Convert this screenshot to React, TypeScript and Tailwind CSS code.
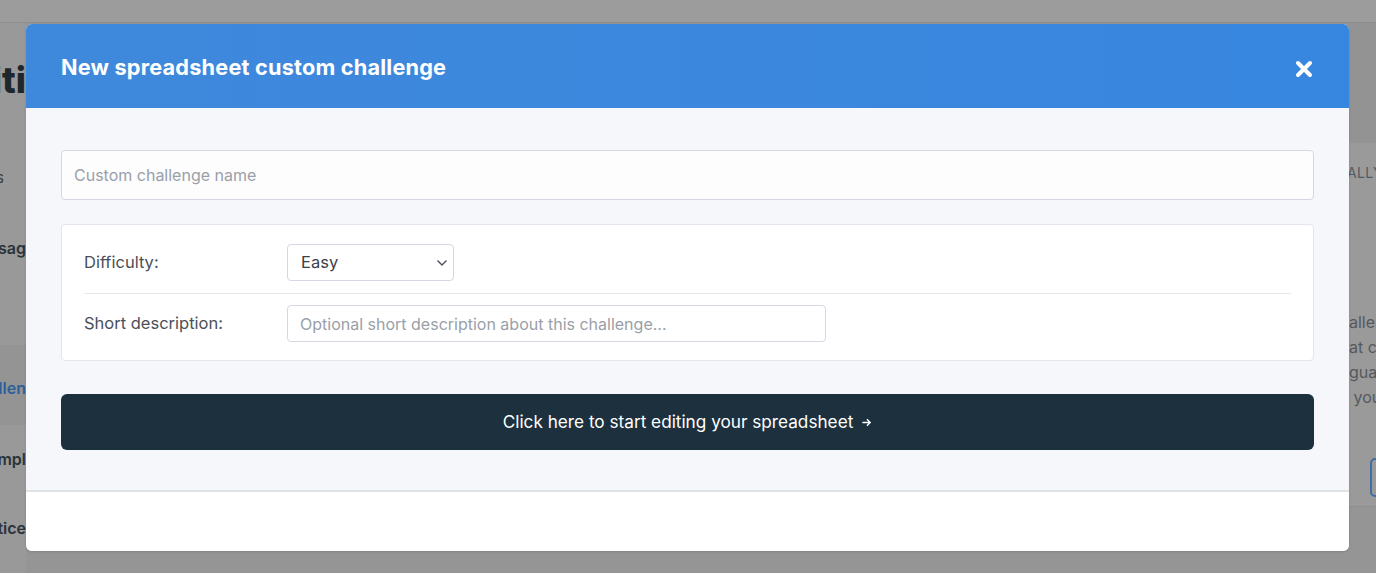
import React from "react";

export default function App() {
  const font = { fontFamily: "Inter, 'Noto Sans', sans-serif" };
  return (
    <div className="relative w-[1376px] h-[573px] overflow-hidden bg-[#959595]" style={font}>
      {/* background page (dimmed) */}
      <div className="flex flex-col h-full">
        <div className="h-[23px] bg-[#9c9c9c] border-b border-[#8e8e8e]" />
        <div className="flex flex-1">
          <div className="w-[26px] bg-[#999999] flex flex-col overflow-hidden">
            <div className="h-[114px] flex items-center justify-end whitespace-nowrap text-[36px] font-extrabold text-[#1e272d]">Competiti</div>
            <div className="h-[64px] flex items-end justify-end whitespace-nowrap text-[15px] text-[#3a3f44] pb-[12px]">
              <span className="mr-[22px]">Tools</span>
            </div>
            <div className="h-[94px] flex items-center justify-end whitespace-nowrap text-[16px] font-semibold text-[#2b3339]">Messag</div>
            <div className="h-[50px]" />
            <div className="h-[80px] bg-[#949494] flex items-center justify-end whitespace-nowrap text-[16px] font-semibold text-[#2d5f9a] pt-[6px]">Challen</div>
            <div className="h-[68px] flex items-center justify-end whitespace-nowrap text-[16px] font-semibold text-[#2b3339]">Exampl</div>
            <div className="h-[70px] flex items-center justify-end whitespace-nowrap text-[16px] font-semibold text-[#2b3339]">Practice</div>
          </div>
          <div className="flex-1" />
          <div className="w-[27px] flex flex-col overflow-hidden">
            <div className="h-[120px] bg-[#939393]" />
            <div className="flex-1 bg-[#9a9a9a] flex flex-col border-b border-[#8f8f8f] mb-[66px]">
              <div className="h-[58px] flex items-center whitespace-nowrap text-[14px] text-[#555a5f] tracking-wide -ml-[2px]">ALLY</div>
              <div className="h-[109px]" />
              <div className="flex flex-col text-[16px] text-[#55595d] leading-[25px] whitespace-nowrap">
                <span>allenges</span>
                <span>at can</span>
                <span>guage</span>
                <span>&nbsp;your</span>
              </div>
              <div className="mt-[48px] ml-[21px] w-[40px] h-[39px] rounded-[5px] border-2 border-[#3f6ea6]" />
            </div>
          </div>
        </div>
      </div>

      {/* modal */}
      <div className="absolute left-[26px] top-[24px] w-[1323px] h-[527px] rounded-[6px] overflow-hidden bg-white flex flex-col shadow-sm">
        <div className="h-[84px] shrink-0 bg-gradient-to-r from-[#3f89dc] to-[#3786df] flex items-center justify-between pl-[35px] pr-[36px]">
          <h2 className="text-white text-[21.7px] font-bold tracking-[0.2px] mt-[3px]">New spreadsheet custom challenge</h2>
          <svg width="18" height="18" viewBox="0 0 18 18" className="mt-[5px]">
            <path d="M3 3 L15 15 M15 3 L3 15" stroke="white" strokeWidth="4" strokeLinecap="round" />
          </svg>
        </div>
        <div className="bg-[#f5f7fb] border-b-2 border-[#dfe2e7] px-[35px] pt-[42px] pb-[40px] flex flex-col">
          <input
            className="h-[50px] w-full rounded-[4px] border border-[#d4d8e2] bg-[#fdfdfe] px-[12px] text-[16px] text-[#333] placeholder:text-[#9aa0a8] outline-none"
            placeholder="Custom challenge name"
            style={font}
          />
          <div className="mt-[24px] bg-white border border-[#e2e5eb] rounded-[4px] px-[22px]">
            <div className="pt-[19px] pb-[12px] flex items-center border-b border-[#e6e8ec]">
              <span className="w-[203px] text-[16.5px] text-[#4a5058]">Difficulty:</span>
              <div className="relative w-[167px] h-[37px]">
                <select
                  className="appearance-none w-full h-full rounded-[4px] border border-[#d4d8e2] bg-white pl-[13px] text-[16.5px] text-[#3b4148] outline-none"
                  style={font}
                  defaultValue="Easy"
                >
                  <option>Easy</option>
                  <option>Medium</option>
                  <option>Hard</option>
                </select>
                <svg className="absolute right-[6px] top-[15px] pointer-events-none" width="12" height="8" viewBox="0 0 12 8">
                  <path d="M1.5 1.5 L6 6 L10.5 1.5" fill="none" stroke="#4a5058" strokeWidth="1.4" />
                </svg>
              </div>
            </div>
            <div className="pt-[11px] pb-[18px] flex items-center">
              <span className="w-[203px] text-[16.5px] text-[#4a5058]">Short description:</span>
              <input
                className="w-[539px] h-[37px] rounded-[4px] border border-[#d4d8e2] bg-white px-[12px] text-[16px] text-[#333] placeholder:text-[#9aa0a8] outline-none"
                placeholder="Optional short description about this challenge..."
                style={font}
              />
            </div>
          </div>
          <button
            className="mt-[33px] h-[56px] w-full rounded-[6px] bg-[#1c303e] text-white text-[17.2px] flex items-center justify-center gap-[8px]"
            style={font}
          >
            <span>Click here to start editing your spreadsheet</span>
            <svg width="11" height="11" viewBox="0 0 12 12" className="mt-[1px]">
              <path d="M1.5 6 H10 M6.5 2.5 L10 6 L6.5 9.5" fill="none" stroke="white" strokeWidth="1.5" />
            </svg>
          </button>
        </div>
        <div className="flex-1 bg-white" />
      </div>
    </div>
  );
}
